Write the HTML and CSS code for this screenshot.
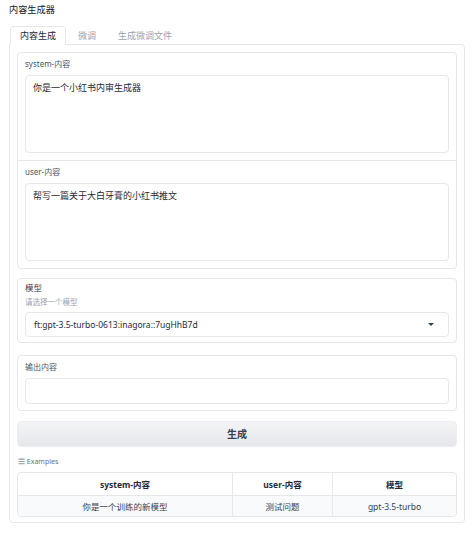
FILE: index.html
```html
<!DOCTYPE html>
<html lang="zh">
<head>
<meta charset="utf-8">
<link rel="stylesheet" href="styles.css">
</head>
<body>
<div class="app">
  <div class="title">内容生成器</div>
  <div class="tabs">
    <div class="tab active">内容生成</div>
    <div class="tab">微调</div>
    <div class="tab">生成微调文件</div>
  </div>
  <div class="panel">
    <div class="box group">
      <div class="block">
        <div class="label">system-内容</div>
        <div class="textarea">你是一个小红书内审生成器</div>
      </div>
      <div class="block">
        <div class="label">user-内容</div>
        <div class="textarea">帮写一篇关于大白牙膏的小红书推文</div>
      </div>
    </div>
    <div class="box model">
      <div class="label">模型</div>
      <div class="hint">请选择一个模型</div>
      <div class="select">
        <span>ft:gpt-3.5-turbo-0613:inagora::7ugHhB7d</span>
        <span class="caret"></span>
      </div>
    </div>
    <div class="box output">
      <div class="label">输出内容</div>
      <div class="input"></div>
    </div>
    <div class="button">生成</div>
    <div class="examples-label"><span class="menu-icon">☰</span> Examples</div>
    <div class="table">
      <div class="row head">
        <div class="cell c1">system-内容</div>
        <div class="cell c2">user-内容</div>
        <div class="cell c3">模型</div>
      </div>
      <div class="row body">
        <div class="cell c1">你是一个训练的新模型</div>
        <div class="cell c2">测试问题</div>
        <div class="cell c3">gpt-3.5-turbo</div>
      </div>
    </div>
  </div>
</div>
</body>
</html>
```
FILE: styles.css
```css
* { box-sizing: border-box; }
html, body { margin: 0; padding: 0; background: #fff; }
body {
  font-family: "Noto Sans", "Noto Sans CJK SC", sans-serif;
  color: #1f2937;
  font-size: 9px;
}
.app { padding: 3px 9px 0 9px; }
.title {
  height: 13px;
  line-height: 13px;
  font-size: 9.2px;
  font-weight: 400;
  color: #111827;
  margin-bottom: 10px;
}
.tabs {
  display: flex;
  height: 19px;
  margin-bottom: -1px;
  position: relative;
  z-index: 1;
}
.tab {
  padding: 0 9px;
  line-height: 18px;
  font-size: 9px;
  color: #9ca3af;
  border: 1px solid transparent;
  border-bottom: none;
  border-radius: 4px 4px 0 0;
  margin-right: 2px;
}
.tab.active {
  color: #1f2937;
  border-color: #e5e7eb;
  background: #fff;
  height: 19px;
  margin-left: 1px;
}
.panel {
  border: 1px solid #e5e7eb;
  border-radius: 0 4px 4px 4px;
  padding: 7px 7px 5px 7px;
  display: flex;
  flex-direction: column;
  height: 479px;
}
.box {
  border: 1px solid #e5e7eb;
  border-radius: 4px;
  background: #fff;
}
.group { display: flex; flex-direction: column; }
.block { padding: 5px 7px 7px 7px; }
.block + .block { border-top: 1px solid #e5e7eb; }
.label {
  line-height: 12px;
  height: 12px;
  font-size: 8px;
  color: #4b5563;
  margin-bottom: 5px;
}
.textarea {
  height: 78px;
  border: 1px solid #e5e7eb;
  border-radius: 4px;
  padding: 6px 7px;
  font-size: 9px;
  line-height: 12px;
  color: #1f2937;
  box-shadow: inset 0 0 1px rgba(0,0,0,0.04);
}
.model { margin-top: 9px; padding: 3px 7px 5px 7px; }
.model .label { margin-bottom: 2px; font-size: 8.5px; color: #374151; }
.hint {
  font-size: 7.5px;
  line-height: 12px;
  color: #9ca3af;
  margin-bottom: 4px;
}
.select {
  height: 25px;
  border: 1px solid #e5e7eb;
  border-radius: 4px;
  display: flex;
  align-items: center;
  justify-content: space-between;
  padding: 0 14px 0 8px;
  font-size: 8.5px;
  color: #1f2937;
}
.caret {
  width: 0; height: 0;
  border-left: 3px solid transparent;
  border-right: 3px solid transparent;
  border-top: 3.5px solid #374151;
}
.output { margin-top: 12px; padding: 5px 7px 6px 7px; }
.output .label { margin-bottom: 5px; }
.input {
  height: 26px;
  border: 1px solid #e5e7eb;
  border-radius: 4px;
}
.button {
  margin-top: 10px;
  height: 26px;
  border-radius: 4px;
  background: linear-gradient(#f3f4f6, #e5e7eb);
  border: 1px solid #eceef1;
  display: flex;
  align-items: center;
  justify-content: center;
  font-size: 10px;
  font-weight: 700;
  color: #374151;
}
.examples-label {
  margin-top: 10px;
  height: 10px;
  line-height: 10px;
  font-size: 7px;
  color: #6b7280;
  padding-left: 1px;
}
.menu-icon { font-size: 7px; color: #9ca3af; }
.table {
  margin-top: 5px;
  border: 1px solid #e5e7eb;
  border-radius: 4px;
  overflow: hidden;
}
.row { display: flex; }
.row.head { height: 22px; font-weight: 700; color: #1f2937; }
.row.body { height: 22px; background: #f9fafb; border-top: 1px solid #e5e7eb; color: #374151; }
.cell {
  display: flex;
  align-items: center;
  justify-content: center;
  font-size: 8.5px;
}
.cell + .cell { border-left: 1px solid #e5e7eb; }
.c1 { width: 214px; }
.c2 { width: 100px; }
.c3 { flex: 1; }
```
